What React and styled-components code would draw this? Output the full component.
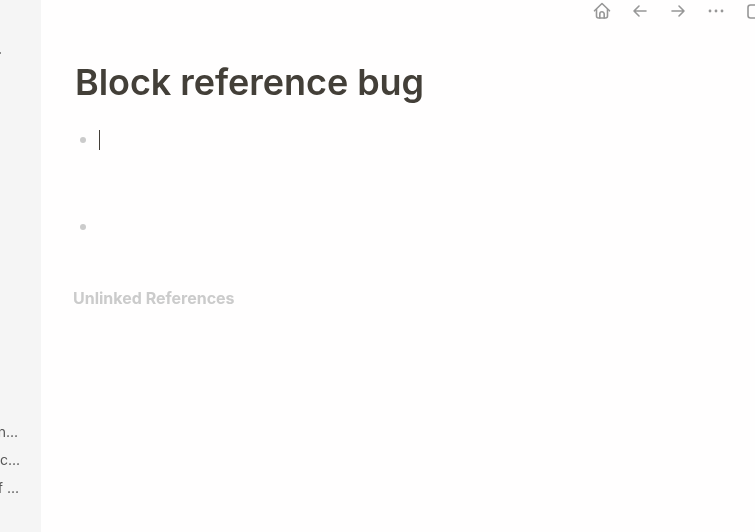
import React from 'react'
import styled, { createGlobalStyle } from 'styled-components'

const GlobalStyle = createGlobalStyle`
  html, body {
    margin: 0;
    padding: 0;
    height: 100%;
    overflow: hidden;
    background: #fffefe;
    font-family: Inter, "Liberation Sans", sans-serif;
  }
`;

const Page = styled.div`
  display: flex;
  width: 755px;
  height: 532px;
  overflow: hidden;
  will-change: transform;
`;

const Sidebar = styled.aside`
  flex: 0 0 41px;
  height: 100%;
  background: #f5f5f5;
  overflow: hidden;
  display: flex;
  flex-direction: column;
  align-items: flex-end;
`;

const SideMark = styled.div`
  align-self: flex-start;
  width: 1px;
  height: 2px;
  margin-top: 52px;
  background: #8a8a8a;
`;

const SideList = styled.div`
  margin-top: 368px;
  display: flex;
  flex-direction: column;
  gap: 8px;
  width: 100%;
`;

const SideItem = styled.div`
  height: 20px;
  line-height: 20px;
  font-size: 14px;
  color: #555555;
  white-space: nowrap;
  padding-right: ${(props) => props.right}px;
  display: flex;
  justify-content: flex-end;
`;

const Main = styled.main`
  flex: 1;
  min-width: 0;
  display: flex;
  flex-direction: column;
`;

const Toolbar = styled.div`
  display: flex;
  justify-content: flex-end;
  gap: 16px;
  margin-right: -10px;
  height: 22px;
`;

const ToolButton = styled.div`
  width: 22px;
  height: 22px;
  flex: none;
  color: #979797;
  display: flex;
  align-items: center;
  justify-content: center;
`;

const Content = styled.div`
  padding: 37px 0 0 32px;
`;

const Title = styled.h1`
  margin: 0 0 0 2px;
  font-size: 36px;
  line-height: 46px;
  font-weight: 600;
  letter-spacing: -0.05px;
  color: #433f38;
`;

const Block = styled.div`
  display: flex;
  align-items: center;
  height: 26px;
  margin-top: ${(props) => props.top}px;
`;

const Bullet = styled.span`
  width: 6px;
  height: 6px;
  margin-left: 7px;
  border-radius: 50%;
  background: #cbcbcb;
`;

const Caret = styled.span`
  width: 1px;
  height: 20px;
  margin-left: 13px;
  background: #433f38;
`;

const Refs = styled.h2`
  margin: 46px 0 0;
  font-size: 16px;
  line-height: 24px;
  font-weight: 700;
  color: #cbcbcb;
`;

const Icon = ({ children }) => (
  <svg width="20" height="20" viewBox="0 0 20 20" fill="none" stroke="currentColor" strokeWidth="1.6" strokeLinecap="round" strokeLinejoin="round">
    {children}
  </svg>
)

const App = () => {
  return (
    <Page>
      <GlobalStyle />
      <Sidebar>
        <SideMark />
        <SideList>
          <SideItem right={23}>n...</SideItem>
          <SideItem right={21}>c...</SideItem>
          <SideItem right={22}>f ...</SideItem>
        </SideList>
      </Sidebar>
      <Main>
        <Toolbar>
          <ToolButton>
            <Icon>
              <path d="M2.5 9.8 10 2.5l7.5 7.3" />
              <path d="M4.5 8.5v6.5a2 2 0 0 0 2 2h7a2 2 0 0 0 2-2V8.5" />
              <path d="M7.8 17v-4a2.2 2.2 0 0 1 4.4 0v4" />
            </Icon>
          </ToolButton>
          <ToolButton>
            <Icon>
              <path d="M16 10H4M9 5l-5 5 5 5" />
            </Icon>
          </ToolButton>
          <ToolButton>
            <Icon>
              <path d="M4 10h12M11 5l5 5-5 5" />
            </Icon>
          </ToolButton>
          <ToolButton>
            <Icon>
              <path d="M4 10h.01M10 10h.01M16 10h.01" strokeWidth="2.8" />
            </Icon>
          </ToolButton>
          <ToolButton>
            <Icon>
              <rect x="4" y="4" width="13" height="13" rx="2.5" />
            </Icon>
          </ToolButton>
        </Toolbar>
        <Content>
          <Title>Block reference bug</Title>
          <Block top={22}>
            <Bullet />
            <Caret />
          </Block>
          <Block top={61}>
            <Bullet />
          </Block>
          <Refs>Unlinked References</Refs>
        </Content>
      </Main>
    </Page>
  )
}

export default App
